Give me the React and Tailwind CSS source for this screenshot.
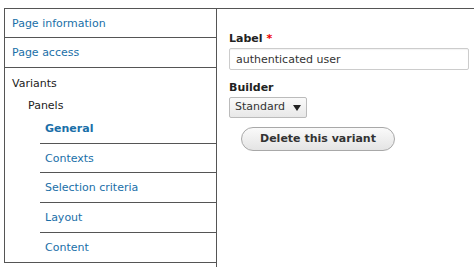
const subItems = [
  { label: 'General', active: true, h: 'h-[30px]' },
  { label: 'Contexts', h: 'h-[29px]' },
  { label: 'Selection criteria', h: 'h-[30px]' },
  { label: 'Layout', h: 'h-[30px]' },
  { label: 'Content', last: true, h: 'h-[29px]' },
];

export default function App() {
  return (
    <div
      className="w-[474px] h-[267px] overflow-hidden bg-white pt-[8px] pl-[4px] text-[11px] text-[#222]"
      style={{ fontFamily: '"DejaVu Sans", Verdana, sans-serif' }}
    >
      <div className="flex h-[259px] border-t border-[#555]">
        <div className="w-[212px] self-start border-l border-b border-[#555]">
          <div className="h-[29px] border-b border-[#555] pl-[7px] pt-[3px] flex items-center">
            <a className="text-[#1a6fa8]">Page information</a>
          </div>
          <div className="h-[30px] border-b border-[#555] pl-[7px] pt-[2px] flex items-center">
            <a className="text-[#1a6fa8]">Page access</a>
          </div>
          <div className="pt-[8px]">
            <div className="pl-[7px] h-[16px] leading-[16px]">Variants</div>
            <div className="pl-[23px] h-[16px] leading-[16px] mt-[6px]">Panels</div>
            <ul className="ml-[35px] mt-[0px]">
              {subItems.map((item) => (
                <li
                  key={item.label}
                  className={`${item.h} pl-[5px] pt-[2px] flex items-center ${item.last ? '' : 'border-b border-[#555]'}`}
                >
                  <a className={`text-[#1a6fa8] ${item.active ? 'font-bold' : ''}`}>{item.label}</a>
                </li>
              ))}
            </ul>
          </div>
        </div>
        <div className="flex-1 border-l border-[#555] pl-[12px] pr-[5px] pt-[22px]">
          <label className="block font-bold leading-[16px]">
            Label <span className="text-[#e00]">*</span>
          </label>
          <input
            readOnly
            value="authenticated user"
            className="mt-[1px] block w-full h-[22px] border border-[#ccc] rounded-[2px] px-[6px] text-[11px] text-[#333] bg-white shadow-[inset_0_1px_1px_rgba(0,0,0,0.05)] outline-none"
          />
          <label className="block font-bold leading-[16px] mt-[10px]">Builder</label>
          <div className="mt-[1px] w-[78px] h-[21px] border border-[#bbb] rounded-[2px] bg-gradient-to-b from-[#fafafa] to-[#e8e8e8] flex items-center justify-between px-[5px] text-[#333]">
            <span>Standard</span>
            <svg width="8" height="6" viewBox="0 0 8 6">
              <path d="M0 0h8L4 6z" fill="#222" />
            </svg>
          </div>
          <button className="mt-[9px] ml-[12px] w-[154px] h-[24px] rounded-full border border-[#a8a8a8] bg-gradient-to-b from-[#fafafa] to-[#e4e4e4] font-bold text-[#333] text-[11px]">
            Delete this variant
          </button>
        </div>
      </div>
    </div>
  );
}
